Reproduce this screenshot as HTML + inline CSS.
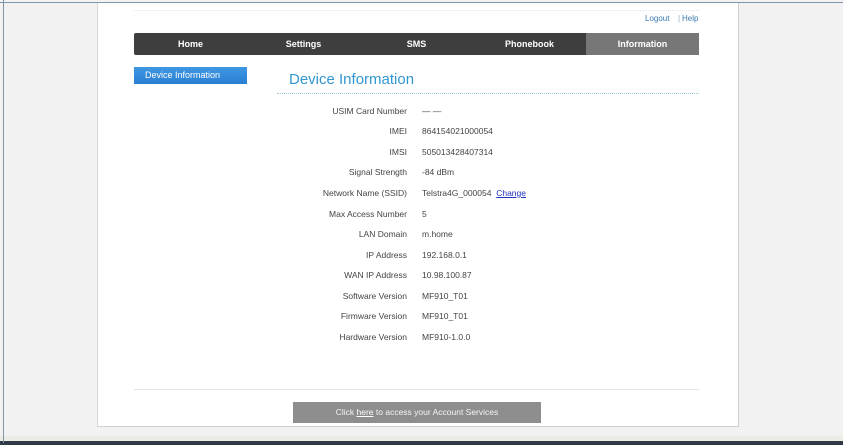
<!DOCTYPE html>
<html><head><style>
body{margin:0;width:843px;height:445px;background:#f2f2f2;position:relative;overflow:hidden;font-family:"Liberation Sans",Arial,sans-serif;}
.frameL{position:absolute;left:3px;top:0;width:1px;height:443px;background:#7f95a8;}
.frameB{position:absolute;left:0;top:441px;width:843px;height:4px;background:#2e3a44;}
.frameB2{position:absolute;left:0;top:436px;width:843px;height:5px;background:#ecebe4;}
.topline{position:absolute;left:0;top:2px;width:843px;height:1px;background:#7f98ae;}
.panel{position:absolute;left:97px;top:3px;width:640px;height:423px;background:#fff;border-right:1px solid #d0d0d0;border-left:1px solid #d8d8d8;border-bottom:1px solid #d0d0d0;}
.dots1{position:absolute;left:134px;top:10px;width:565px;border-top:1px dotted #dde4ea;}
.top{position:absolute;top:14px;font-size:8px;color:#3a7ab0;}
.nav{position:absolute;left:134px;top:33px;width:565px;height:22px;background:#3e3e3e;border-radius:2px;display:flex;}
.nav div{width:113px;text-align:center;color:#fff;font-weight:bold;font-size:9px;line-height:22px;}
.nav .act{background:#777;}
.side{position:absolute;left:134px;top:67px;width:113px;height:17px;background:linear-gradient(#3f97e2,#2a7fd2);color:#fff;font-size:9px;line-height:16px;}
.side span{padding-left:11px;}
h1{position:absolute;left:289px;top:71px;margin:0;font-weight:normal;font-size:15px;color:#3296d0;}
.dots2{position:absolute;left:277px;top:93px;width:422px;border-top:1px dotted #9cc6dc;}
.row{position:absolute;font-size:8.5px;color:#444;height:12px;width:843px;}
.l{position:absolute;right:436px;white-space:nowrap;}
.v{position:absolute;left:422px;white-space:nowrap;}
a{color:#2030c0;text-decoration:underline;}
.bl{position:absolute;left:134px;top:389px;width:565px;height:1px;background:#e4e4e4;}
.btn{position:absolute;left:293px;top:402px;width:248px;height:21px;background:#8e8e8e;color:#f4f4f4;font-size:8.5px;text-align:center;line-height:21px;}
.btn u{color:#fff}
</style></head><body>
<div class="panel"></div>
<div class="topline"></div>
<div class="frameB2"></div>
<div class="frameB"></div>
<div class="frameL"></div>
<div class="dots1"></div>
<div class="top" style="left:645px">Logout</div>
<div class="top" style="left:678px;color:#9ab">|</div>
<div class="top" style="left:682px">Help</div>
<div class="nav"><div>Home</div><div>Settings</div><div>SMS</div><div>Phonebook</div><div class="act">Information</div></div>
<div class="side"><span>Device Information</span></div>
<h1>Device Information</h1>
<div class="dots2"></div>
<div class="row" style="top:106px"><span class="l">USIM Card Number</span><span class="v">— —</span></div>
<div class="row" style="top:126px"><span class="l">IMEI</span><span class="v">864154021000054</span></div>
<div class="row" style="top:147px"><span class="l">IMSI</span><span class="v">505013428407314</span></div>
<div class="row" style="top:167px"><span class="l">Signal Strength</span><span class="v">-84 dBm</span></div>
<div class="row" style="top:188px"><span class="l">Network Name (SSID)</span><span class="v">Telstra4G_000054 &nbsp;<a>Change</a></span></div>
<div class="row" style="top:209px"><span class="l">Max Access Number</span><span class="v">5</span></div>
<div class="row" style="top:229px"><span class="l">LAN Domain</span><span class="v">m.home</span></div>
<div class="row" style="top:250px"><span class="l">IP Address</span><span class="v">192.168.0.1</span></div>
<div class="row" style="top:270px"><span class="l">WAN IP Address</span><span class="v">10.98.100.87</span></div>
<div class="row" style="top:291px"><span class="l">Software Version</span><span class="v">MF910_T01</span></div>
<div class="row" style="top:311px"><span class="l">Firmware Version</span><span class="v">MF910_T01</span></div>
<div class="row" style="top:332px"><span class="l">Hardware Version</span><span class="v">MF910-1.0.0</span></div>
<div class="bl"></div>
<div class="btn">Click <u>here</u> to access your Account Services</div>
</body></html>
